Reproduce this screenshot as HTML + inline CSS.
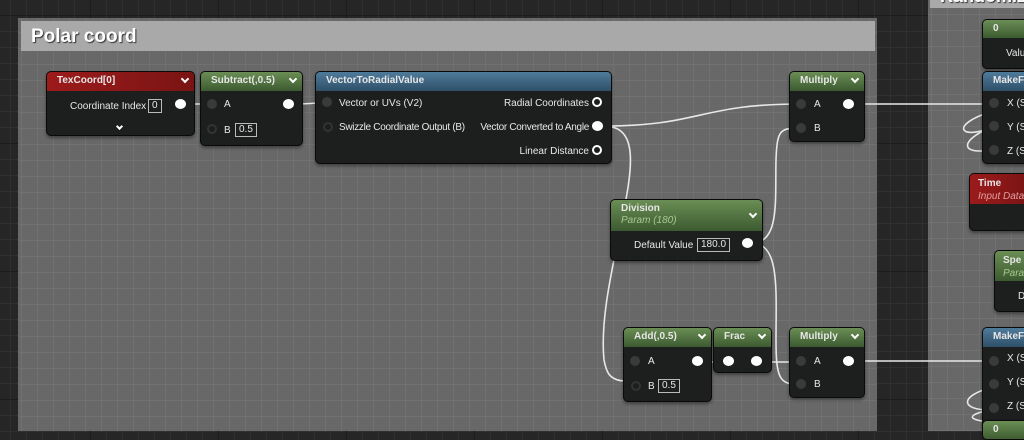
<!DOCTYPE html>
<html><head><style>
*{margin:0;padding:0;box-sizing:border-box}
body{width:1024px;height:431px;overflow:hidden;position:relative;font-family:"Liberation Sans",sans-serif;font-size:10px;color:#e8e8e8;
background:#262626;
background-image:linear-gradient(#1c1c1c 1px,transparent 1px),linear-gradient(90deg,#1c1c1c 1px,transparent 1px),linear-gradient(#303030 1px,transparent 1px),linear-gradient(90deg,#303030 1px,transparent 1px);
background-size:128px 128px,128px 128px,16px 16px,16px 16px;background-position:-38px 15px,-38px 15px,-38px 15px,-38px 15px}
.cm{position:absolute;background:#686868;
background-image:linear-gradient(#717171 1px,transparent 1px),linear-gradient(90deg,#717171 1px,transparent 1px);background-size:16px 16px;background-position:3px 14px}
.ct{position:absolute;background:#a9a9a9;color:#fff;font-weight:bold;font-size:19px;text-shadow:1px 1px 1px #333;padding:5px 10px;white-space:nowrap;overflow:hidden}
.n{position:absolute;background:#1d1e1e;border:1px solid #0a0a0a;border-radius:5px;box-shadow:0 2px 3px rgba(0,0,0,.4);overflow:hidden}
.h{height:19px;padding:3px 10px;font-weight:bold;font-size:10px;color:#e6e6e6;position:relative;white-space:nowrap}
.g{background:linear-gradient(#6a8e55,#3c5a30)}
.r{background:linear-gradient(90deg,#9c1b1b,#7a1414)}
.b{background:linear-gradient(#4f7b9b,#2f5068)}
.h .v{position:absolute;right:6px;top:2px;font-size:9px}
.t{position:absolute;white-space:nowrap;font-size:10px}
.pi{position:absolute;width:10px;height:10px;border-radius:50%;background:#3a3a3a}
.po{position:absolute;width:11px;height:10px;border-radius:50%;background:#fff}
.ph{position:absolute;width:10px;height:10px;border-radius:50%;border:2px solid #fff}
.box{position:absolute;border:1px solid #bbb;padding:0 3px;font-size:10px;line-height:12px}
.chev{display:inline-block;width:6px;height:6px;border-right:2px solid #fff;border-bottom:2px solid #fff;transform:rotate(45deg)}
</style></head><body>
<div class="cm" style="left:18px;top:18px;width:859px;height:413px"></div>
<div class="ct" style="left:21px;top:21px;width:854px;height:30px">Polar coord</div>
<div class="cm" style="left:928px;top:0;width:96px;height:431px"></div>
<div class="ct" style="left:930px;top:-14px;width:94px;height:22px;font-size:18px;padding:0 10px">Randomiz</div>

<svg width="1024" height="431" style="position:absolute;left:0;top:0" fill="none" stroke="#e8e8e8" stroke-width="1.6">
<path d="M185 104 H212"/><path d="M294 104 Q310 104 327 102"/>
<path d="M604 126 C700 126 700 104 800 104"/>
<path d="M604 126 C640 126 632 170 622 220 C612 270 600 320 604 360 C606 370 608 380 624 381"/>
<path d="M752 243 C780 243 775 200 776 160 C777 130 780 128 800 128"/>
<path d="M752 243 C780 243 776 290 776 340 C776 380 780 384 800 385"/>
<path d="M697 362 H718"/><path d="M764 362 H800"/>
<path d="M855 104 H990"/><path d="M855 361 H990"/>
<path d="M990 128 C960 140 960 155 990 150"/><path d="M990 112 C950 125 960 140 990 128"/>
<path d="M990 388 C960 396 960 410 990 410"/><path d="M990 410 C965 415 968 420 990 422"/>
</svg>

<div class="n" style="left:46px;top:71px;width:149px;height:65px"><div class="h r">TexCoord[0]<span class="v"><i class="chev"></i></span></div>
<div class="t" style="left:23px;top:29px">Coordinate Index</div><div class="box" style="left:101px;top:27px">0</div>
<div style="position:absolute;left:70px;top:49px"><i class="chev" style="width:5px;height:5px"></i></div></div>
<div class="po" style="left:175px;top:99px"></div>
<div class="n" style="left:200px;top:71px;width:103px;height:75px"><div class="h g">Subtract(,0.5)<span class="v"><i class="chev"></i></span></div>
<div class="t" style="left:23px;top:27px">A</div><div class="t" style="left:23px;top:53px">B</div><div class="box" style="left:34px;top:51px">0.5</div></div>
<div class="pi" style="left:207px;top:99px"></div><div class="ph" style="left:207px;top:124px;border-color:#333"></div><div class="po" style="left:283px;top:99px"></div>
<div class="n" style="left:315px;top:71px;width:297px;height:93px"><div class="h b">VectorToRadialValue</div>
<div class="t" style="left:23px;top:26px">Vector or UVs (V2)</div><div class="t" style="left:23px;top:50px;letter-spacing:-0.3px">Swizzle Coordinate Output (B)</div>
<div class="t" style="right:22px;top:26px">Radial Coordinates</div><div class="t" style="right:22px;top:50px;letter-spacing:-0.3px">Vector Converted to Angle</div><div class="t" style="right:22px;top:74px">Linear Distance</div></div>
<div class="pi" style="left:322px;top:97px"></div><div class="ph" style="left:323px;top:122px;border-color:#333"></div>
<div class="ph" style="left:592px;top:97px"></div><div class="po" style="left:592px;top:121px"></div><div class="ph" style="left:592px;top:145px"></div>
<div class="n" style="left:789px;top:71px;width:76px;height:71px"><div class="h g">Multiply<span class="v"><i class="chev"></i></span></div>
<div class="t" style="left:24px;top:27px">A</div><div class="t" style="left:24px;top:51px">B</div></div>
<div class="pi" style="left:796px;top:99px"></div><div class="pi" style="left:796px;top:123px"></div><div class="po" style="left:843px;top:99px"></div>
<div class="n" style="left:610px;top:199px;width:153px;height:62px"><div class="h g" style="height:31px;line-height:12px">Division<br><i style="font-weight:normal;color:#a8c890">Param (180)</i><span class="v" style="top:8px"><i class="chev"></i></span></div>
<div class="t" style="left:23px;top:40px">Default Value</div><div class="box" style="left:86px;top:38px">180.0</div></div>
<div class="po" style="left:742px;top:238px"></div>
<div class="n" style="left:623px;top:327px;width:89px;height:75px"><div class="h g">Add(,0.5)<span class="v"><i class="chev"></i></span></div>
<div class="t" style="left:24px;top:28px">A</div><div class="t" style="left:24px;top:53px">B</div><div class="box" style="left:34px;top:51px">0.5</div></div>
<div class="pi" style="left:630px;top:356px"></div><div class="ph" style="left:631px;top:381px;border-color:#333"></div><div class="po" style="left:692px;top:356px"></div>
<div class="n" style="left:713px;top:327px;width:59px;height:46px"><div class="h g">Frac<span class="v"><i class="chev"></i></span></div></div>
<div class="po" style="left:723px;top:356px"></div><div class="po" style="left:751px;top:356px"></div>
<div class="n" style="left:789px;top:327px;width:76px;height:71px"><div class="h g">Multiply<span class="v"><i class="chev"></i></span></div>
<div class="t" style="left:24px;top:28px">A</div><div class="t" style="left:24px;top:51px">B</div></div>
<div class="pi" style="left:796px;top:356px"></div><div class="pi" style="left:796px;top:379px"></div><div class="po" style="left:843px;top:356px"></div>
<div class="n" style="left:982px;top:19px;width:60px;height:50px"><div class="h g" style="height:18px">0</div><div class="t" style="left:23px;top:28px">Valu</div></div>
<div class="n" style="left:982px;top:71px;width:60px;height:93px"><div class="h b">MakeF</div>
<div class="t" style="left:24px;top:26px">X (S)</div><div class="t" style="left:24px;top:50px">Y (S)</div><div class="t" style="left:24px;top:74px">Z (S)</div></div>
<div class="pi" style="left:989px;top:98px"></div><div class="pi" style="left:989px;top:121px"></div><div class="pi" style="left:989px;top:145px"></div>
<div class="n" style="left:969px;top:173px;width:60px;height:58px"><div class="h r" style="height:30px;line-height:13px;padding:3px 8px">Time<br><i style="font-weight:normal;color:#e0a0a0">Input Data</i></div></div>
<div class="n" style="left:994px;top:250px;width:40px;height:62px"><div class="h g" style="height:30px;line-height:13px;padding:3px 8px">Spe<br><i style="font-weight:normal;color:#a8c890">Para</i></div><div class="t" style="left:23px;top:40px">D</div></div>
<div class="n" style="left:982px;top:327px;width:60px;height:100px"><div class="h b">MakeF</div>
<div class="t" style="left:24px;top:25px">X (S)</div><div class="t" style="left:24px;top:49px">Y (S)</div><div class="t" style="left:24px;top:73px">Z (S)</div></div>
<div class="pi" style="left:989px;top:356px"></div><div class="pi" style="left:989px;top:379px"></div><div class="pi" style="left:989px;top:403px"></div>
<div class="n" style="left:982px;top:420px;width:60px;height:20px"><div class="h g">0</div></div>
</body></html>
